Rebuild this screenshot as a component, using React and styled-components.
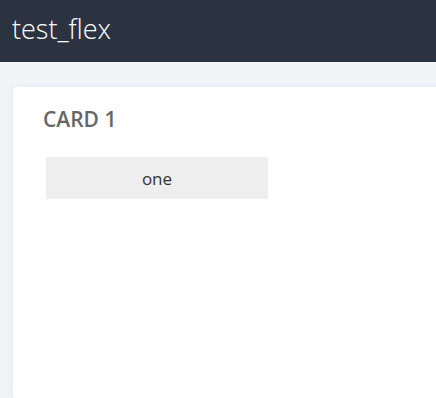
import styled, { createGlobalStyle } from "styled-components";

const GlobalStyle = createGlobalStyle`
  html, body {
    margin: 0;
    padding: 0;
    overflow: hidden;
    background: #f3f4f8;
    font-family: "Open Sans", "Noto Sans", sans-serif;
  }
`;

export default function App() {
  return (
    <>
      <GlobalStyle />
      <Page>
        <Header>
          <Title>test_flex</Title>
        </Header>
        <Main>
          <Card>
            <CardTitle>CARD 1</CardTitle>
            <Row>
              <Item>one</Item>
            </Row>
          </Card>
        </Main>
      </Page>
    </>
  );
}

const Page = styled.div`
  width: 436px;
  height: 398px;
  display: flex;
  flex-direction: column;
  overflow: hidden;
`;

const Header = styled.header`
  height: 62px;
  flex-shrink: 0;
  background: #2c3340;
  display: flex;
  align-items: center;
  padding-left: 12px;
  padding-bottom: 6px;
  box-sizing: border-box;
`;

const Title = styled.h1`
  margin: 0;
  font-size: 27px;
  font-weight: 300;
  color: #ffffff;
  letter-spacing: 0;
`;

const Main = styled.main`
  flex: 1;
  padding: 25px 0 0 13px;
  display: flex;
`;

const Card = styled.section`
  width: 600px;
  flex-shrink: 0;
  background: #ffffff;
  border-radius: 4px;
  box-shadow: 0 0 8px rgba(30, 40, 80, 0.06);
  padding: 18px 30px;
  box-sizing: border-box;
`;

const CardTitle = styled.h2`
  margin: 0;
  font-size: 21px;
  font-weight: 600;
  color: #666666;
  line-height: 28px;
`;

const Row = styled.div`
  display: flex;
  margin-top: 24px;
  padding-left: 3px;
`;

const Item = styled.div`
  width: 222px;
  height: 42px;
  background: #eeeeee;
  color: #333333;
  font-size: 17px;
  display: flex;
  align-items: center;
  justify-content: center;
`;
